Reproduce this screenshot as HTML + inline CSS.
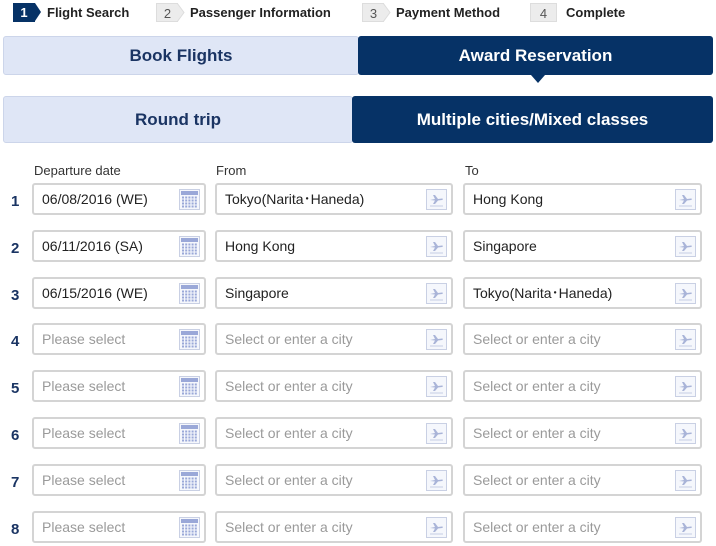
<!DOCTYPE html>
<html><head><meta charset="utf-8"><style>
*{box-sizing:border-box;margin:0;padding:0}
body{width:716px;height:546px;background:#fff;font-family:"Liberation Sans",sans-serif;position:relative;overflow:hidden;color:#222}
.a{position:absolute}
.stp{position:absolute;top:3px;height:19px;font-size:13px;line-height:19px;font-weight:bold;color:#222}
.num{position:absolute;top:3px;height:19px;width:22px;text-align:center;font-size:13px;line-height:19px;background:#ececec;border:1px solid #ddd;color:#555}
.arr{position:absolute;top:3px;width:8px;height:19px}
.tab{position:absolute;font-weight:bold;font-size:17px;text-align:center;border-radius:3px}
.lt{background:#dfe6f6;color:#1a3463;border:1px solid #ccd5ea}
.dk{background:#063266;color:#fff}
.lbl{position:absolute;top:163px;font-size:13px;color:#333}
.box{position:absolute;height:32px;border:2px solid #d4d4d4;border-radius:3px;background:#fff;font-size:14px;line-height:28px;padding-left:8px;color:#222}
.ph{color:#9a9a9a}
.rn{position:absolute;left:11px;font-size:15px;font-weight:bold;color:#1a3463}
.ic{position:absolute;right:4px;top:4px;width:21px;height:21px;border:1px solid #c9d0e4;background:#f5f7fc}
</style></head><body>
<div class="a" style="left:13px;top:3px;width:22px;height:19px;background:#063266;color:#fff;font-size:13px;line-height:19px;text-align:center;font-weight:bold">1</div>
<div class="a" style="left:35px;top:3px;width:0;height:0;border-top:9.5px solid transparent;border-bottom:9.5px solid transparent;border-left:6px solid #063266"></div>
<div class="stp" style="left:47px">Flight Search</div>
<div class="num" style="left:156px;border-right:none">2</div>
<svg class="arr" style="left:177px" viewBox="0 0 8 19"><path d="M0 0 L7 9.5 L0 19 Z" fill="#ececec"/><path d="M0 0 L7 9.5 L0 19" stroke="#ddd" fill="none"/></svg>
<div class="stp" style="left:190px">Passenger Information</div>
<div class="num" style="left:362px;border-right:none">3</div>
<svg class="arr" style="left:383px" viewBox="0 0 8 19"><path d="M0 0 L7 9.5 L0 19 Z" fill="#ececec"/><path d="M0 0 L7 9.5 L0 19" stroke="#ddd" fill="none"/></svg>
<div class="stp" style="left:396px">Payment Method</div>
<div class="num" style="left:530px;width:27px">4</div><div class="stp" style="left:566px">Complete</div>

<div class="tab lt" style="left:3px;top:36px;width:356px;height:39px;line-height:37px">Book Flights</div>
<div class="tab dk" style="left:358px;top:36px;width:355px;height:39px;line-height:39px">Award Reservation</div>
<div class="a" style="left:531px;top:75px;border-left:7px solid transparent;border-right:7px solid transparent;border-top:8px solid #063266"></div>
<div class="tab lt" style="left:3px;top:96px;width:350px;height:47px;line-height:45px">Round trip</div>
<div class="tab dk" style="left:352px;top:96px;width:361px;height:47px;line-height:47px">Multiple cities/Mixed classes</div>

<div class="lbl" style="left:34px">Departure date</div>
<div class="lbl" style="left:216px">From</div>
<div class="lbl" style="left:465px">To</div>

<div id="rows"></div>
<script>
var d=[["06/08/2016 (WE)","Tokyo(Narita･Haneda)","Hong Kong"],["06/11/2016 (SA)","Hong Kong","Singapore"],["06/15/2016 (WE)","Singapore","Tokyo(Narita･Haneda)"]];
var plane='<svg width="19" height="19" viewBox="0 0 19 19"><path d="M3 10 L8 9 L6 5 L8 5 L11 9 L15 8.5 Q17 9 15 10 L11 10.5 L8 14 L6 14 L8 10.5 Z" fill="#a9b4d8"/><path d="M3 16 H16" stroke="#c5cce3"/></svg>';
var h='';
for(var i=0;i<8;i++){var y=183+i*46.8;var r=d[i];
h+='<div class="rn" style="top:'+(y+10)+'px">'+(i+1)+'</div>';
h+='<div class="box'+(r?'':' ph')+'" style="left:32px;top:'+y+'px;width:174px">'+(r?r[0]:'Please select')+'<div class="ic"><svg width="19" height="19" viewBox="0 0 19 19"><rect x="1" y="1" width="17" height="4" fill="#9aa8d8"/>';
for(var a=0;a<4;a++)for(var b=0;b<5;b++)h+='<rect x="'+(2+b*3.2)+'" y="'+(6.5+a*3)+'" width="2" height="2" fill="#9aa8d8"/>';
h+='</svg></div></div>';
h+='<div class="box'+(r?'':' ph')+'" style="left:215px;top:'+y+'px;width:238px">'+(r?r[1]:'Select or enter a city')+'<div class="ic">'+plane+'</div></div>';
h+='<div class="box'+(r?'':' ph')+'" style="left:463px;top:'+y+'px;width:239px">'+(r?r[2]:'Select or enter a city')+'<div class="ic">'+plane+'</div></div>';}
document.getElementById('rows').innerHTML=h;
</script>
</body></html>
